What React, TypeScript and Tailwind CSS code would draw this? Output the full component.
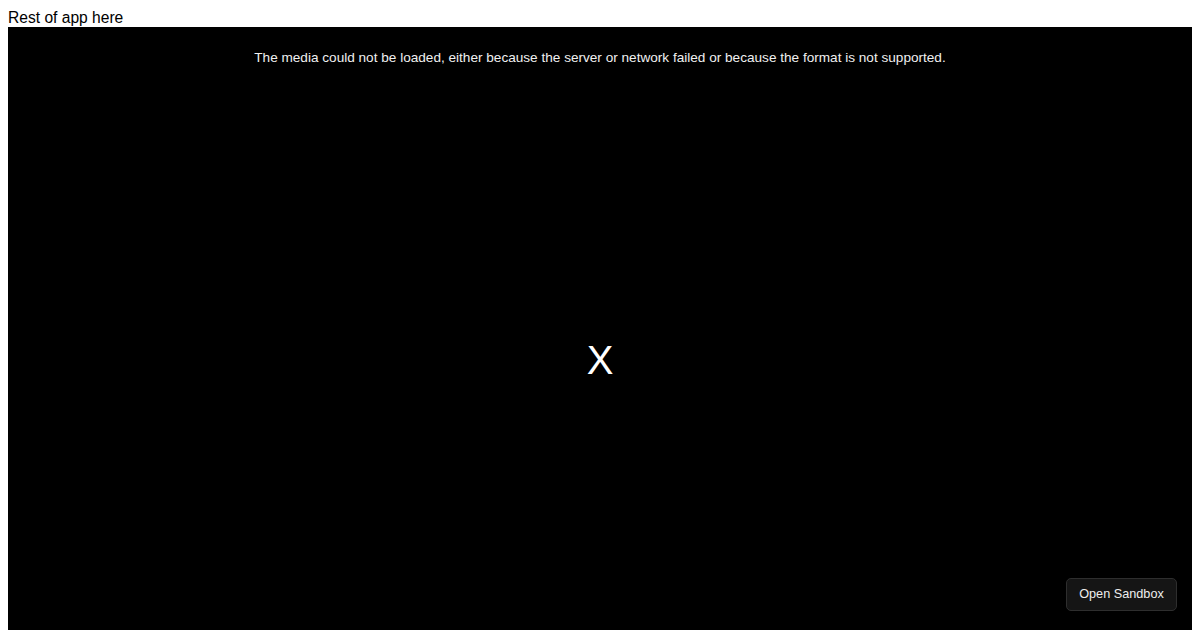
export default function App() {
  return (
    <div className="bg-white p-2 pb-2 min-h-screen" style={{ fontFamily: '"Liberation Sans", Arial, sans-serif' }}>
      <div className="text-[15.6px] leading-[19px] text-black">Rest of app here</div>
      <div className="relative w-full aspect-video bg-black">
        <div className="absolute top-[23px] left-0 right-0 text-center text-[13.6px] leading-[16px] text-[#f0f0f0]">
          The media could not be loaded, either because the server or network failed or because the format is not supported.
        </div>
        <div className="absolute inset-0 flex items-center justify-center">
          <span className="text-[40px] leading-none text-white">X</span>
        </div>
      </div>
      <button className="fixed right-[23px] bottom-[19px] w-[111px] h-[33px] pt-[1px] rounded-[5px] border border-[#2e2e2e] bg-[#151515] text-[12.7px] text-[#eeeeee] flex items-center justify-center">
        Open Sandbox
      </button>
    </div>
  );
}
